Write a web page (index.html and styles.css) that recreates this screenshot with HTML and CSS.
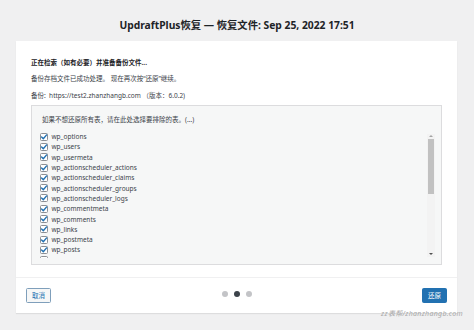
FILE: index.html
```html
<!DOCTYPE html>
<html lang="zh">
<head>
<meta charset="utf-8">
<link rel="stylesheet" href="styles.css">
</head>
<body>
<div class="page">
  <h1 class="title">UpdraftPlus恢复 — 恢复文件: Sep 25, 2022 17:51</h1>
  <div class="card">
    <div class="body">
      <p class="status">正在检索（如有必要）并准备备份文件...</p>
      <p class="line">备份存档文件已成功处理。 现在再次按“还原”继续。</p>
      <p class="line line-3">备份:&nbsp; https://test2.zhanzhangb.com （版本：6.0.2)</p>
      <div class="box">
        <p class="hint">如果不想还原所有表，请在此处选择要排除的表。(...)</p>
        <div class="scroller">
          <ul class="tables">
            <li><span class="cb"><svg viewBox="0 0 8 8"><path d="M1.6 4.1 L3.3 5.8 L6.6 1.9" /></svg></span>wp_options</li>
            <li><span class="cb"><svg viewBox="0 0 8 8"><path d="M1.6 4.1 L3.3 5.8 L6.6 1.9" /></svg></span>wp_users</li>
            <li><span class="cb"><svg viewBox="0 0 8 8"><path d="M1.6 4.1 L3.3 5.8 L6.6 1.9" /></svg></span>wp_usermeta</li>
            <li><span class="cb"><svg viewBox="0 0 8 8"><path d="M1.6 4.1 L3.3 5.8 L6.6 1.9" /></svg></span>wp_actionscheduler_actions</li>
            <li><span class="cb"><svg viewBox="0 0 8 8"><path d="M1.6 4.1 L3.3 5.8 L6.6 1.9" /></svg></span>wp_actionscheduler_claims</li>
            <li><span class="cb"><svg viewBox="0 0 8 8"><path d="M1.6 4.1 L3.3 5.8 L6.6 1.9" /></svg></span>wp_actionscheduler_groups</li>
            <li><span class="cb"><svg viewBox="0 0 8 8"><path d="M1.6 4.1 L3.3 5.8 L6.6 1.9" /></svg></span>wp_actionscheduler_logs</li>
            <li><span class="cb"><svg viewBox="0 0 8 8"><path d="M1.6 4.1 L3.3 5.8 L6.6 1.9" /></svg></span>wp_commentmeta</li>
            <li><span class="cb"><svg viewBox="0 0 8 8"><path d="M1.6 4.1 L3.3 5.8 L6.6 1.9" /></svg></span>wp_comments</li>
            <li><span class="cb"><svg viewBox="0 0 8 8"><path d="M1.6 4.1 L3.3 5.8 L6.6 1.9" /></svg></span>wp_links</li>
            <li><span class="cb"><svg viewBox="0 0 8 8"><path d="M1.6 4.1 L3.3 5.8 L6.6 1.9" /></svg></span>wp_postmeta</li>
            <li><span class="cb"><svg viewBox="0 0 8 8"><path d="M1.6 4.1 L3.3 5.8 L6.6 1.9" /></svg></span>wp_posts</li>
            <li><span class="cb"></span></li>
          </ul>
          <div class="scrollbar">
            <span class="arrow up"></span>
            <span class="thumb"></span>
            <span class="track"></span>
            <span class="arrow down"></span>
          </div>
        </div>
      </div>
    </div>
    <div class="footer">
      <button class="btn btn-cancel">取消</button>
      <div class="dots"><span class="dot"></span><span class="dot active"></span><span class="dot"></span></div>
      <button class="btn btn-primary">还原</button>
    </div>
    <span class="watermark">zz表帮/zhanzhangb.com</span>
  </div>
</div>
</body>
</html>
```

FILE: styles.css
```css
html, body {
  margin: 0;
  padding: 0;
  background: #f0f0f1;
}
body {
  width: 474px;
  height: 330px;
  overflow: hidden;
  font-family: "Noto Sans", "Noto Sans CJK SC", sans-serif;
  color: #3c434a;
}
.page {
  display: flex;
  flex-direction: column;
}
.title {
  margin: 18px 0 0;
  font-size: 10.3px;
  line-height: 14px;
  font-weight: 700;
  color: #1d2327;
  text-align: center;
}
.card {
  position: relative;
  margin: 8.5px 17px 0 16px;
  background: #fff;
  box-shadow: 0 1px 1px rgba(0, 0, 0, 0.08);
}
.body {
  padding: 17.5px 15px 0 15px;
  display: flex;
  flex-direction: column;
}
p {
  margin: 0;
}
.status {
  font-size: 6.5px;
  line-height: 10px;
  font-weight: 700;
  color: #1d2327;
}
.line {
  font-size: 6.5px;
  line-height: 10px;
  margin-top: 6px;
}
.line-3 {
  margin-top: 7px;
}
.box {
  margin-top: 3.5px;
  border: 1px solid #dcdcde;
  background: #f6f7f7;
  padding: 9px 6px 6px 8px;
  display: flex;
  flex-direction: column;
}
.hint {
  font-size: 6.5px;
  line-height: 10px;
  padding-left: 2px;
}
.scroller {
  margin-top: 7px;
  height: 126px;
  display: flex;
}
.tables {
  flex: 1;
  list-style: none;
  margin: 0;
  padding: 0;
  overflow: hidden;
}
.tables li {
  display: flex;
  align-items: center;
  height: 10.3px;
  font-size: 6.5px;
  color: #3c434a;
}
.cb {
  width: 8px;
  height: 8px;
  box-sizing: border-box;
  border: 1px solid #8c8f94;
  border-radius: 1.5px;
  background: #fff;
  margin-right: 3.5px;
  display: flex;
  align-items: center;
  justify-content: center;
  flex-shrink: 0;
}
.cb svg {
  width: 8px;
  height: 8px;
  fill: none;
  stroke: #2271b1;
  stroke-width: 1.4;
  stroke-linecap: round;
  stroke-linejoin: round;
  overflow: visible;
}
.scrollbar {
  width: 8px;
  margin-top: 2px;
  margin-bottom: 1px;
  display: flex;
  flex-direction: column;
  background: #f3f3f3;
}
.arrow {
  height: 5px;
  display: flex;
  align-items: center;
  justify-content: center;
}
.arrow::before {
  content: "";
  width: 0;
  height: 0;
  border-left: 2px solid transparent;
  border-right: 2px solid transparent;
}
.arrow.up::before {
  border-bottom: 2px solid #a3a3a3;
}
.arrow.down::before {
  border-top: 2px solid #505050;
}
.thumb {
  height: 55px;
  margin: 0 1px;
  background: #c1c1c1;
}
.track {
  flex: 1;
}
.footer {
  margin-top: 12px;
  border-top: 1px solid #f0f0f1;
  height: 35px;
  padding: 0 10px;
  display: flex;
  align-items: center;
  justify-content: space-between;
}
.btn {
  height: 15px;
  padding: 0 4px;
  font-family: "Noto Sans", "Noto Sans CJK SC", sans-serif;
  font-size: 6.5px;
  line-height: 13px;
  border-radius: 1.5px;
  cursor: pointer;
}
.btn-cancel {
  width: 25px;
  background: #f6f7f7;
  border: 1px solid #7f9fbb;
  color: #2271b1;
}
.btn-primary {
  width: 25px;
  background: #2271b1;
  border: 1px solid #2271b1;
  color: #fff;
}
.dots {
  display: flex;
  gap: 6px;
  margin-top: -3px;
}
.dot {
  width: 6px;
  height: 6px;
  border-radius: 50%;
  background: #c3c4c7;
}
.dot.active {
  background: #3c434a;
}
.watermark {
  position: absolute;
  right: -6px;
  bottom: -5px;
  font-size: 7px;
  font-style: italic;
  color: #a7a7a7;
  letter-spacing: 0.3px;
}
```
